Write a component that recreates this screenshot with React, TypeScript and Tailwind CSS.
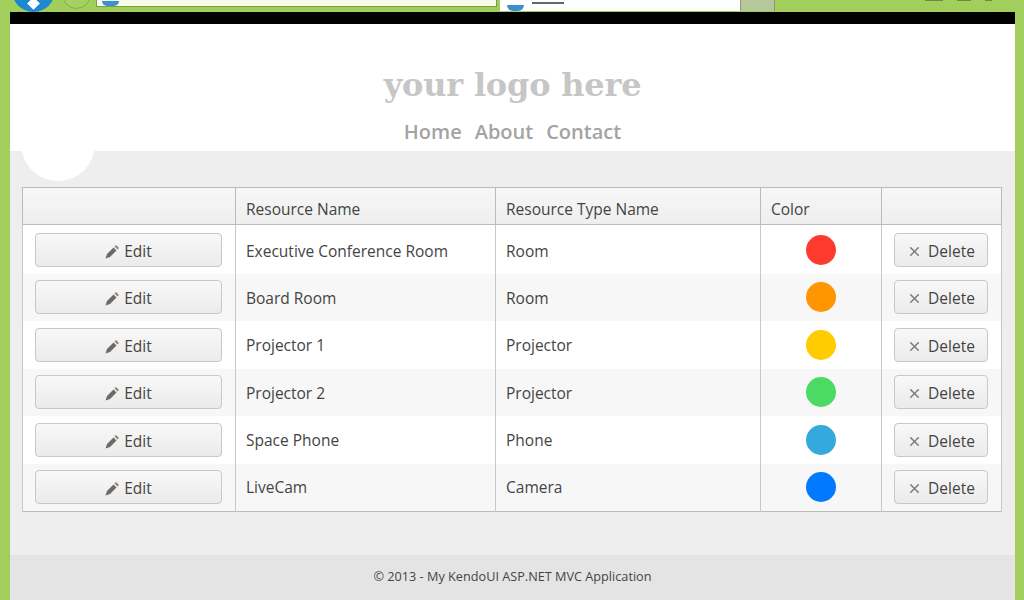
import { X } from "lucide-react";

const resources = [
  { name: "Executive Conference Room", type: "Room", color: "bg-[#ff3b30]" },
  { name: "Board Room", type: "Room", color: "bg-[#ff9500]" },
  { name: "Projector 1", type: "Projector", color: "bg-[#ffcc00]" },
  { name: "Projector 2", type: "Projector", color: "bg-[#4cd964]" },
  { name: "Space Phone", type: "Phone", color: "bg-[#34aadc]" },
  { name: "LiveCam", type: "Camera", color: "bg-[#007aff]" },
];

const buttonClass =
  "flex h-[34px] items-center justify-center rounded-[4px] border border-[#c8c8c8] bg-gradient-to-b from-[#f8f8f8] to-[#ebebeb] pt-[3px] text-[#444]";

function PencilIcon() {
  return (
    <svg width="15" height="15" viewBox="0 0 15 15">
      <path d="M0.5 14.5l1.5-4.5 6.5-6.5 3 3-6.5 6.5z" fill="#6f6a66" />
      <path d="M9.5 2.5l1.5-1.5 3 3-1.5 1.5z" fill="#8a8581" />
    </svg>
  );
}

function BrowserChrome() {
  return (
    <div className="flex h-[12px] overflow-hidden bg-[#a2cf5b]">
      <div className="ml-[12px] -mt-[31px] flex h-[43px] w-[43px] shrink-0 items-end justify-center rounded-full bg-[#1b88cf] pb-[4px]">
        <div className="h-[9px] w-[9px] rotate-45 bg-white" />
      </div>
      <div className="ml-[7px] -mt-[20px] h-[29px] w-[29px] shrink-0 rounded-full border border-[#7fae43] bg-[#a6d062]" />
      <div className="ml-[5px] flex h-[7px] w-[401px] shrink-0 items-end border border-t-0 border-[#7b9c4c] bg-[#f8fbe9] pl-[5px]">
        <div className="h-[5px] w-[17px] rounded-b-full bg-[#3d8fd1]" />
      </div>
      <div className="ml-[3px] flex h-[11px] w-[240px] shrink-0 items-end bg-white pl-[7px]">
        <div className="h-[6px] w-[17px] rounded-b-full bg-[#3d8fd1]" />
        <div className="mb-[7px] ml-[8px] h-[2px] w-[32px] bg-[#666]" />
      </div>
      <div className="h-[11px] w-[35px] shrink-0 border-x border-[#8c9a73] bg-[#b6c79b]" />
      <div className="ml-[150px] flex gap-[14px]">
        <div className="h-[1px] w-[18px] bg-[#6c8a3f]" />
        <div className="h-[1px] w-[14px] bg-[#6c8a3f]" />
        <div className="h-[1px] w-[7px] bg-[#6c8a3f]" />
      </div>
    </div>
  );
}

export default function App() {
  return (
    <div className="flex h-[600px] w-[1024px] flex-col overflow-hidden bg-[#a2cf5b] font-['Open_Sans',sans-serif] text-[#444]">
      <BrowserChrome />
      <div className="ml-[10px] mr-[9px] flex min-h-0 flex-1 flex-col">
        <div className="h-[12px] bg-black" />

        <header className="relative z-10 flex h-[127px] flex-col items-center bg-white">
          <div className="pt-[39px] font-['DejaVu_Serif',serif] text-[32px] leading-[44px] font-bold tracking-[-0.2px] text-[#c6c6c6]">
            your logo here
          </div>
          <nav className="mt-[10px] flex gap-[13px] text-[20px] leading-[30px] font-semibold text-[#a3a3a3]">
            <span>Home</span>
            <span>About</span>
            <span>Contact</span>
          </nav>
          <div className="absolute left-[11px] top-[83px] h-[74px] w-[74px] rounded-full bg-white" />
        </header>

        <main className="flex-1 bg-[#eeeeee] px-[12px] pt-[36px]">
          <table className="w-[980px] table-fixed border-collapse border border-[#bbbbbb] text-[15.5px]">
            <colgroup>
              <col className="w-[213px]" />
              <col className="w-[260px]" />
              <col className="w-[265px]" />
              <col className="w-[121px]" />
              <col className="w-[120px]" />
            </colgroup>
            <thead>
              <tr className="h-[37px] bg-gradient-to-b from-[#f7f7f7] to-[#eeeeee] text-left">
                <th className="border border-[#bbbbbb]" />
                <th className="border border-[#bbbbbb] pl-[10px] pt-[7px] font-normal">Resource Name</th>
                <th className="border border-[#bbbbbb] pl-[10px] pt-[7px] font-normal">Resource Type Name</th>
                <th className="border border-[#bbbbbb] pl-[10px] pt-[7px] font-normal">Color</th>
                <th className="border border-[#bbbbbb]" />
              </tr>
            </thead>
            <tbody>
              {resources.map((item, index) => {
                const isFirst = index === 0;
                const rowClass = isFirst
                  ? "h-[49px] bg-white"
                  : index % 2
                    ? "h-[47.5px] bg-[#f7f7f7]"
                    : "h-[47.5px] bg-white";
                const textClass = isFirst
                  ? "border-x border-[#c8c8c8] pl-[10px] pt-[4px]"
                  : "border-x border-[#c8c8c8] pl-[10px] pt-[2px]";
                const nudge = isFirst ? "pt-[1px]" : "";

                return (
                  <tr key={item.name} className={rowClass}>
                    <td className={`border-x border-[#c8c8c8] pl-[12px] pr-[13px] ${nudge}`}>
                      <button className={`${buttonClass} w-full gap-[4px]`}>
                        <PencilIcon />
                        Edit
                      </button>
                    </td>
                    <td className={textClass}>{item.name}</td>
                    <td className={textClass}>{item.type}</td>
                    <td className={`border-x border-[#c8c8c8] ${nudge}`}>
                      <div className={`mx-auto h-[30px] w-[30px] rounded-full ${item.color}`} />
                    </td>
                    <td className={`border-x border-[#c8c8c8] pl-[12px] ${nudge}`}>
                      <button className={`${buttonClass} w-[94px] gap-[6px]`}>
                        <X size={15} strokeWidth={2.4} className="text-[#7a7a7a]" />
                        Delete
                      </button>
                    </td>
                  </tr>
                );
              })}
            </tbody>
          </table>
        </main>

        <footer className="flex h-[45px] items-center justify-center bg-[#e4e4e4] pb-[2px] text-[12.7px]">
          © 2013 - My KendoUI ASP.NET MVC Application
        </footer>
      </div>
    </div>
  );
}
